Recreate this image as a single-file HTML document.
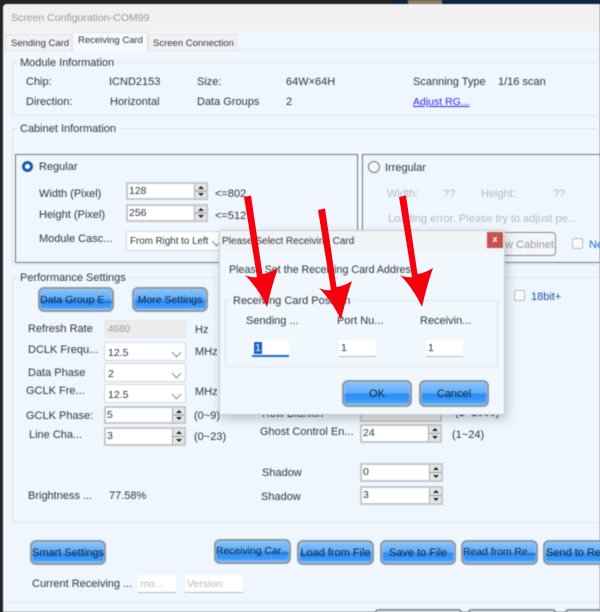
<!DOCTYPE html>
<html><head><meta charset="utf-8"><style>
html,body{margin:0;padding:0;background:#222}
#r{position:relative;width:600px;height:612px;overflow:hidden;background:#242424;font:11px "Liberation Sans",sans-serif;color:#2f353b}
#w{position:absolute;left:0;top:0;width:600px;height:612px;filter:blur(.4px)}
#w div,#w span{position:absolute;box-sizing:border-box}
.t{white-space:nowrap;line-height:14px;margin-top:1px}
.g{border:1px solid #dfe5ea}
.cap{background:#eff6fd;padding:0 3px;white-space:nowrap;line-height:14px}
.in{background:#fff;border:2px solid #c4c8cc;padding-left:1px;line-height:14px;font-size:10.5px}
.sp{background:linear-gradient(#e6e6e6 0,#e6e6e6 48%,#999 48%,#999 54%,#e6e6e6 54%);border-left:1px solid #aaa;width:12px;top:0;bottom:0;right:0}
.sp:before{content:"";position:absolute;left:3px;top:2px;border:3px solid transparent;border-top:0;border-bottom:3px solid #222}
.sp:after{content:"";position:absolute;left:3px;bottom:2px;border:3px solid transparent;border-bottom:0;border-top:3px solid #222}
.cb{background:#fff;border:1px solid #d3d8dc;border-radius:2px;line-height:14px;padding-left:3px;font-size:10.5px}
.cb:after{content:"";position:absolute;right:5px;top:6px;width:6px;height:6px;border-right:1px solid #888;border-bottom:1px solid #888;transform:rotate(45deg)}
.b{border:2px solid #8b98a4;border-radius:6px;background:linear-gradient(#88c3fb 0,#62aef9 46%,#2a8cf5 54%,#3e9af7 85%,#80bdf9 100%);text-align:center;color:#10233a;white-space:nowrap;overflow:hidden;line-height:22px;font-size:11px;box-shadow:inset 0 0 0 1px rgba(190,215,240,.45)}
.e{background:#fff;border-bottom:1px solid #bbb;line-height:15px;padding-left:2px;font-size:10.5px}
.d{color:#b5bbc1}
</style></head><body><div id="r"><div id="w">
<div style="left:393px;top:0;width:207px;height:4px;background:#0b2445"></div>
<div style="left:408px;top:0;width:34px;height:4px;background:#8a7a60"></div>
<div style="left:3px;top:4px;width:597px;height:608px;background:#eff6fd;border-radius:4px 0 0 0"></div>
<div style="left:3px;top:4px;width:597px;height:27px;background:#f1f1f1;border-radius:4px 0 0 0"></div>
<div class="t" style="left:11px;top:10px;color:#9a9a9a;font-size:10.5px">Screen Configuration-COM99</div>

<div style="left:5px;top:49px;width:595px;height:1px;background:#dfe5ea"></div>
<div class="t" style="left:5px;top:33px;width:67px;height:17px;background:#f2f2f2;border:1px solid #e2e2e2;padding:2px 0 0 5px;font-size:9.5px">Sending Card</div>
<div class="t" style="left:72px;top:31px;width:76px;height:19px;background:#f6fafe;border:1px solid #e2e6ea;border-bottom:0;padding:1px 0 0 5px;font-size:9.5px">Receiving Card</div>
<div class="t" style="left:148px;top:33px;width:89px;height:17px;background:#f2f2f2;border:1px solid #e2e2e2;padding:2px 0 0 4px;font-size:9.5px">Screen Connection</div>

<div class="g" style="left:12px;top:62px;width:600px;height:54px"></div>
<div class="cap" style="left:17px;top:56px">Module Information</div>
<div class="t" style="left:26px;top:74px">Chip:</div><div class="t" style="left:109px;top:74px">ICND2153</div>
<div class="t" style="left:197px;top:74px">Size:</div><div class="t" style="left:286px;top:74px">64W×64H</div>
<div class="t" style="left:413px;top:74px">Scanning Type</div><div class="t" style="left:498px;top:74px">1/16 scan</div>
<div class="t" style="left:26px;top:94px">Direction:</div><div class="t" style="left:110px;top:94px">Horizontal</div>
<div class="t" style="left:197px;top:94px">Data Groups</div><div class="t" style="left:286px;top:94px">2</div>
<div class="t" style="left:413px;top:94px;color:#2a2af0;text-decoration:underline;font-size:10.5px">Adjust RG...</div>

<div class="g" style="left:12px;top:128px;width:600px;height:137px"></div>
<div class="cap" style="left:17px;top:122px">Cabinet Information</div>
<div style="left:15px;top:154px;width:343px;height:109px;border:1px solid #777"></div>
<div style="left:362px;top:154px;width:250px;height:109px;border:1px solid #777"></div>
<div style="left:22px;top:161px;width:11px;height:11px;border-radius:50%;border:3px solid #0f5cb0;background:#fff"></div>
<div class="t" style="left:39px;top:159px">Regular</div>
<div style="left:368px;top:161px;width:12px;height:12px;border-radius:50%;border:1px solid #777;background:#f4f6f8"></div>
<div class="t" style="left:385px;top:160px">Irregular</div>

<div class="t" style="left:39px;top:186px">Width (Pixel)</div>
<div class="in" style="left:126px;top:182px;width:82px;height:18px">128<span class="sp"></span></div>
<div class="t" style="left:215px;top:186px">&lt;=802</div>
<div class="t" style="left:39px;top:207px">Height (Pixel)</div>
<div class="in" style="left:126px;top:204px;width:82px;height:18px">256<span class="sp"></span></div>
<div class="t" style="left:215px;top:208px">&lt;=512</div>
<div class="t" style="left:39px;top:231px">Module Casc...</div>
<div class="cb" style="left:126px;top:231px;width:100px;height:20px;padding-top:3px;font-size:9.8px">From Right to Left</div>

<div class="t d" style="left:387px;top:186px">Width:</div><div class="t d" style="left:443px;top:186px">??</div>
<div class="t d" style="left:481px;top:186px">Height:</div><div class="t d" style="left:553px;top:186px">??</div>
<div class="t d" style="left:388px;top:211px">Loading error. Please try to adjust pe...</div>
<div class="d" style="left:490px;top:232px;width:66px;height:24px;border:1px solid #888;border-radius:4px;background:#f4f7fa;color:#999;padding:5px 6px 0 0;text-align:right;white-space:nowrap;line-height:14px">New Cabinet</div>
<div style="left:572px;top:238px;width:11px;height:11px;border:1px solid #bbb;border-radius:2px;background:#fafafa"></div>
<div class="t" style="left:589px;top:237px;color:#2a6bc0">Ne</div>

<div class="g" style="left:12px;top:277px;width:600px;height:246px"></div>
<div class="cap" style="left:17px;top:271px">Performance Settings</div>
<div class="b" style="left:38px;top:287px;width:76px;height:25px;font-size:10.5px">Data Group E...</div>
<div class="b" style="left:132px;top:287px;width:76px;height:25px;font-size:10.5px">More Settings</div>
<div style="left:514px;top:290px;width:11px;height:11px;border:1px solid #bbb;border-radius:2px;background:#fafafa"></div>
<div class="t" style="left:531px;top:289px;color:#1f4fa0">18bit+</div>

<div class="t" style="left:28px;top:321px">Refresh Rate</div>
<div class="t" style="left:105px;top:320px;width:81px;height:18px;background:#ececec;border:1px solid #e4e4e4;color:#999;padding:2px 0 0 2px;font-size:10px;margin-top:0">4680</div>
<div class="t" style="left:195px;top:322px">Hz</div>
<div class="t" style="left:28px;top:342px">DCLK Frequ...</div>
<div class="cb" style="left:104px;top:342px;width:82px;height:19px;padding-top:3px">12.5</div>
<div class="t" style="left:195px;top:344px">MHz</div>
<div class="t" style="left:28px;top:365px">Data Phase</div>
<div class="cb" style="left:104px;top:363px;width:82px;height:19px;padding-top:3px">2</div>
<div class="t" style="left:26px;top:383px">GCLK Fre...</div>
<div class="cb" style="left:104px;top:384px;width:82px;height:19px;padding-top:3px">12.5</div>
<div class="t" style="left:195px;top:384px">MHz</div>
<div class="t" style="left:26px;top:408px">GCLK Phase:</div>
<div class="in" style="left:104px;top:406px;width:82px;height:18px">5<span class="sp"></span></div>
<div class="t" style="left:194px;top:408px">(0~9)</div>
<div class="t" style="left:29px;top:427px">Line Cha...</div>
<div class="in" style="left:104px;top:427px;width:82px;height:19px">3<span class="sp"></span></div>
<div class="t" style="left:194px;top:429px">(0~23)</div>
<div class="t" style="left:28px;top:488px">Brightness ...</div>
<div class="t" style="left:109px;top:488px">77.58%</div>

<div class="t" style="left:262px;top:406px">Row Blankin</div>
<div class="in" style="left:360px;top:406px;width:82px;height:16px;background:#ececec"></div>
<div class="t" style="left:455px;top:405px">(1~2000)</div>
<div class="t" style="left:260px;top:424px">Ghost Control En...</div>
<div class="in" style="left:360px;top:424px;width:82px;height:19px">24<span class="sp"></span></div>
<div class="t" style="left:452px;top:427px">(1~24)</div>
<div class="t" style="left:262px;top:465px">Shadow</div>
<div class="in" style="left:360px;top:463px;width:83px;height:19px">0<span class="sp"></span></div>
<div class="t" style="left:261px;top:489px">Shadow</div>
<div class="in" style="left:360px;top:486px;width:83px;height:19px">3<span class="sp"></span></div>

<div class="b" style="left:30px;top:540px;width:76px;height:25px">Smart Settings</div>
<div class="b" style="left:214px;top:539px;width:77px;height:25px;font-size:10.4px">Receiving Car...</div>
<div class="b" style="left:297px;top:540px;width:77px;height:25px">Load from File</div>
<div class="b" style="left:380px;top:540px;width:76px;height:25px">Save to File</div>
<div class="b" style="left:461px;top:540px;width:77px;height:25px;font-size:10.4px">Read from Re...</div>
<div class="b" style="left:543px;top:540px;width:70px;height:25px;text-align:left;padding-left:1px">Send to Rec</div>
<div class="t" style="left:32px;top:576px">Current Receiving ...</div>
<div class="e d" style="left:138px;top:575px;width:38px;height:18px;padding-top:2px">mo...</div>
<div class="e d" style="left:185px;top:575px;width:58px;height:18px;padding-top:2px">Version:</div>
<div style="left:4px;top:602px;width:596px;height:1px;background:#e3e8ec"></div>
<div style="left:375px;top:609px;width:87px;height:6px;border:2px solid #8a949d;border-radius:5px;background:#e8eef3"></div>
<div style="left:468px;top:609px;width:88px;height:6px;border:2px solid #8a949d;border-radius:5px;background:#e8eef3"></div>
<div style="left:565px;top:609px;width:50px;height:6px;border:2px solid #8a949d;border-radius:5px;background:#e8eef3"></div>

<!-- dialog -->
<div style="left:219px;top:230px;width:286px;height:185px;background:#f0f7fd;border:1px solid #c9cfd5;box-shadow:2px 4px 10px rgba(0,0,0,.22)"></div>
<div style="left:220px;top:231px;width:284px;height:20px;background:#f1f3f5"></div>
<div class="t" style="left:222px;top:234px;font-size:10px">Please Select Receiving Card</div>
<div style="left:487px;top:232px;width:16px;height:16px;background:#c9504f;color:#fff;text-align:center;font-size:9px;font-weight:bold;line-height:14px">x</div>
<div class="t" style="left:229px;top:262px;font-size:10.7px">Please Set the Receiving Card Address</div>
<div class="g" style="left:225px;top:300px;width:273px;height:67px"></div>
<div class="cap" style="left:230px;top:294px;background:#f0f7fd">Receiving Card Position</div>
<div class="t" style="left:246px;top:313px">Sending ...</div>
<div class="t" style="left:337px;top:313px">Port Nu...</div>
<div class="t" style="left:420px;top:313px">Receivin...</div>
<div class="e" style="left:252px;top:340px;width:37px;height:17px;border-bottom:2px solid #1a6fd0;padding-top:1px"><span style="position:relative;background:#1a62c8;color:#fff;padding:0 1px">1</span></div>
<div class="e" style="left:339px;top:340px;width:37px;height:17px;padding-top:1px">1</div>
<div class="e" style="left:426px;top:340px;width:37px;height:17px;padding-top:1px">1</div>
<div class="b" style="left:342px;top:380px;width:70px;height:27px;line-height:24px;font-size:11px">OK</div>
<div class="b" style="left:419px;top:380px;width:70px;height:27px;line-height:24px;font-size:11px">Cancel</div>
</div>
<svg width="600" height="612" style="position:absolute;left:0;top:0;filter:blur(.3px)">
<g fill="#f60010">
<path d="M244 197L251 195.5L262.5 274Q270 273 278 268Q272 285 267 307Q258 288 245 275Q252 278 257 277Z"/>
<path transform="translate(74 13)" d="M244 197L251 195.5L262.5 274Q270 273 278 268Q272 285 267 307Q258 288 245 275Q252 278 257 277Z"/>
<path transform="translate(155 0)" d="M244 197L251 195.5L262.5 274Q270 273 278 268Q272 285 267 307Q258 288 245 275Q252 278 257 277Z"/>
</g></svg>
</div></body></html>
